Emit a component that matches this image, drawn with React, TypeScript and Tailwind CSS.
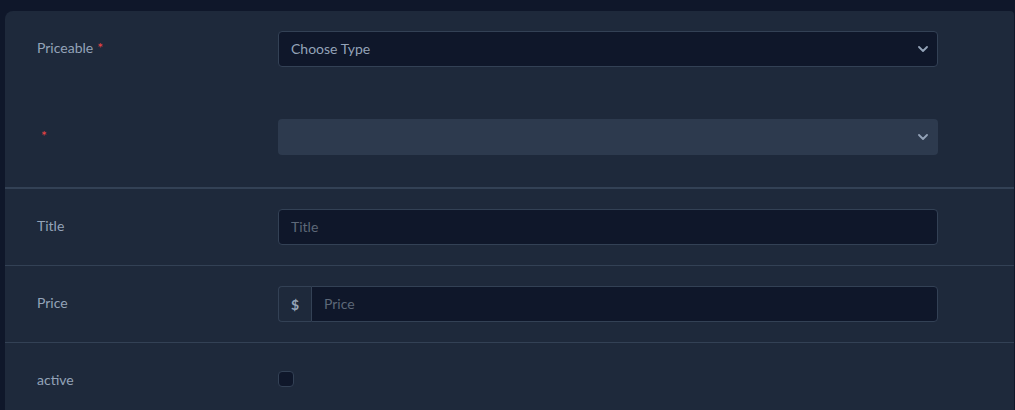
import React from "react";

function Chevron() {
  return (
    <svg
      viewBox="0 0 10 6"
      className="pointer-events-none absolute right-[10px] top-1/2 h-[6px] w-[10px] -translate-y-1/2"
      fill="none"
    >
      <path d="M1 1l4 4 4-4" stroke="#94a3b8" strokeWidth="1.8" strokeLinecap="round" strokeLinejoin="round" />
    </svg>
  );
}

function Label({ text, required }: { text: string; required?: boolean }) {
  return (
    <div className="w-[273px] shrink-0 -translate-y-[2px] pl-8 text-[14px] text-[#94a3b8]">
      {text}
      {required && <span className="ml-1 text-[#ef4444]">*</span>}
    </div>
  );
}

export default function App() {
  return (
    <div className="h-[410px] overflow-hidden bg-[#0f172a] pt-[11px] pl-[5px] pr-[1px] font-['Lato',sans-serif]">
      <div className="rounded-l-lg rounded-r-sm bg-[#1e293b]">
        {/* priceable morph */}
        <div className="border-b-2 border-[#334155]">
          <div className="flex items-center py-5">
            <Label text="Priceable" required />
            <div className="relative w-[660px]">
              <div className="flex h-[36px] items-center rounded border border-[#334155] bg-[#0f172a] px-3 pb-[2px] text-[14px] text-[#94a3b8]">
                Choose Type
              </div>
              <Chevron />
            </div>
          </div>
          <div className="flex items-center py-8">
            <Label text="" required />
            <div className="relative w-[660px]">
              <div className="h-[36px] rounded bg-[#2d3a4e]" />
              <Chevron />
            </div>
          </div>
        </div>

        <div className="flex items-center border-b border-[#334155] py-5">
          <Label text="Title" />
          <input
            placeholder="Title"
            className="h-[36px] w-[660px] rounded border border-[#334155] bg-[#0f172a] px-3 pb-[2px] text-[14px] text-[#94a3b8] placeholder:text-[#5d6878] outline-none"
          />
        </div>

        <div className="flex items-center border-b border-[#334155] py-5">
          <Label text="Price" />
          <div className="flex h-[36px] w-[660px]">
            <span className="flex w-[33px] items-center justify-center rounded-l border border-r-0 border-[#334155] bg-[#1e293b] text-[14px] font-bold text-[#94a3b8]">
              $
            </span>
            <input
              placeholder="Price"
              className="flex-1 rounded-r border border-[#334155] bg-[#0f172a] px-3 pb-[2px] text-[14px] text-[#94a3b8] placeholder:text-[#5d6878] outline-none"
            />
          </div>
        </div>

        <div className="flex items-center py-5">
          <Label text="active" />
          <div className="flex h-[36px] -translate-y-[2px] items-center">
            <span className="h-[16px] w-[16px] rounded border border-[#334155] bg-[#0f172a]" />
          </div>
        </div>
      </div>
    </div>
  );
}
